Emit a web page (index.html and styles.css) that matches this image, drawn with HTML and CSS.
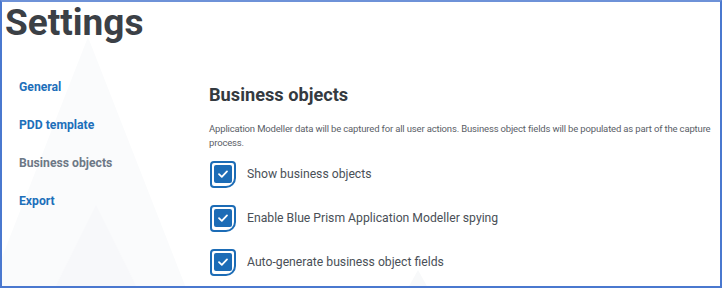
FILE: index.html
```html
<!DOCTYPE html>
<html>
<head>
<meta charset="utf-8">
<link rel="stylesheet" href="styles.css">
</head>
<body>
<div class="frame">
  <svg class="watermark" width="722" height="288" viewBox="0 0 722 288">
    <polygon points="88,37 -10,288 186,288" fill="#fafbfc"/>
    <polygon points="96,205 55,288 137,288" fill="#f7f8fa"/>
    <polygon points="418,270 408,288 428,288" fill="#f8f9fa"/>
  </svg>
  <h1 class="title">Settings</h1>
  <div class="layout">
    <nav class="nav">
      <a class="nav-item">General</a>
      <a class="nav-item">PDD template</a>
      <a class="nav-item current">Business objects</a>
      <a class="nav-item">Export</a>
    </nav>
    <main class="main">
      <h2 class="section-title">Business objects</h2>
      <p class="desc">Application Modeller data will be captured for all user actions. Business object fields will be populated as part of the capture process.</p>
      <div class="option">
        <span class="check"><span class="check-fill"><svg width="12" height="10" viewBox="0 0 12 10"><path d="M2 5.2 L4.8 7.8 L10 2.4" fill="none" stroke="#fff" stroke-width="1.8" stroke-linecap="round" stroke-linejoin="round"/></svg></span></span>
        <span class="label">Show business objects</span>
      </div>
      <div class="option">
        <span class="check"><span class="check-fill"><svg width="12" height="10" viewBox="0 0 12 10"><path d="M2 5.2 L4.8 7.8 L10 2.4" fill="none" stroke="#fff" stroke-width="1.8" stroke-linecap="round" stroke-linejoin="round"/></svg></span></span>
        <span class="label">Enable Blue Prism Application Modeller spying</span>
      </div>
      <div class="option">
        <span class="check"><span class="check-fill"><svg width="12" height="10" viewBox="0 0 12 10"><path d="M2 5.2 L4.8 7.8 L10 2.4" fill="none" stroke="#fff" stroke-width="1.8" stroke-linecap="round" stroke-linejoin="round"/></svg></span></span>
        <span class="label">Auto-generate business object fields</span>
      </div>
    </main>
  </div>
</div>
</body>
</html>
```

FILE: styles.css
```css
html, body {
  margin: 0;
  padding: 0;
  background: #fff;
}
body {
  font-family: Roboto, "Liberation Sans", Arial, sans-serif;
}
.frame {
  position: relative;
  width: 722px;
  height: 288px;
  box-sizing: border-box;
  border: 2px solid #4a78cf;
  border-top-color: #6e92d8;
  overflow: hidden;
}
.watermark {
  position: absolute;
  left: -2px;
  top: -2px;
  z-index: 0;
}
.title, .layout {
  position: relative;
  z-index: 1;
}
.title {
  margin: 0;
  padding-left: 3px;
  height: 54px;
  font-size: 37px;
  line-height: 42px;
  font-weight: 700;
  color: #3b4046;
}
.layout {
  display: flex;
}
.nav {
  width: 190px;
  padding-left: 17px;
  padding-top: 12px;
  display: flex;
  flex-direction: column;
}
.nav-item {
  height: 38px;
  line-height: 38px;
  font-size: 12.2px;
  font-weight: 700;
  color: #1d6fba;
}
.nav-item.current {
  color: #6d7886;
}
.main {
  flex: 1;
  padding-top: 27px;
}
.section-title {
  margin: 0;
  font-size: 18.2px;
  line-height: 24px;
  font-weight: 700;
  color: #343a40;
}
.desc {
  margin: 15px 0 2px;
  font-size: 9.5px;
  line-height: 14px;
  letter-spacing: -0.16px;
  color: #5a6067;
  padding-right: 4px;
}
.option {
  height: 44px;
  display: flex;
  align-items: center;
  gap: 11px;
  padding-left: 1px;
}
.check {
  width: 26px;
  height: 27px;
  box-sizing: border-box;
  border: 2px solid #1c6cb6;
  border-radius: 4px 4px 10px 4px;
  display: flex;
  align-items: center;
  justify-content: center;
}
.check-fill {
  width: 18px;
  height: 18px;
  background: #1c6cb6;
  border-radius: 2px;
  display: flex;
  align-items: center;
  justify-content: center;
}
.label {
  font-size: 12.2px;
  color: #4a5057;
}
```
